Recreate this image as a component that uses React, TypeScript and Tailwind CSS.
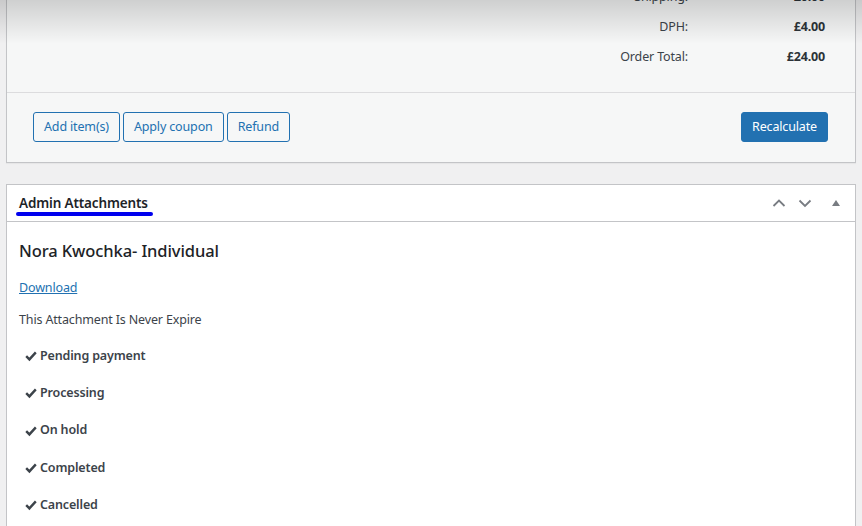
const statuses = ["Pending payment", "Processing", "On hold", "Completed", "Cancelled"];

const totals = [
  { label: "Shipping:", value: "£0.00" },
  { label: "DPH:", value: "£4.00" },
  { label: "Order Total:", value: "£24.00" },
];

function ChevronUp() {
  return (
    <svg width="16" height="16" viewBox="0 0 16 16" fill="none">
      <path d="M2.5 11 L8 5.5 L13.5 11" stroke="#787c82" strokeWidth="1.8" />
    </svg>
  );
}

function ChevronDown() {
  return (
    <svg width="16" height="16" viewBox="0 0 16 16" fill="none">
      <path d="M2.5 5.5 L8 11 L13.5 5.5" stroke="#787c82" strokeWidth="1.8" />
    </svg>
  );
}

function Tick() {
  return (
    <svg width="12" height="12" viewBox="0 0 12 12" fill="none">
      <path d="M1.2 6.2 L4.4 9.4 L10.8 2.4" stroke="#3c434a" strokeWidth="2.4" />
    </svg>
  );
}

export default function App() {
  return (
    <div
      className="relative w-[862px] h-[526px] overflow-hidden bg-[#f0f0f1] px-[6px] text-[12.5px] tracking-[-0.15px] text-[#3c434a]"
      style={{ fontFamily: '"Noto Sans", "Open Sans", sans-serif' }}
    >
      {/* Order items panel */}
      <div className="-mt-[20px] border border-t-0 border-[#c3c4c7] bg-[#f6f7f7] shadow-[0_1px_1px_rgba(0,0,0,0.04)]">
        <div className="flex flex-col pt-[2px] pb-[20px] pr-[30px]">
          {totals.map((t) => (
            <div key={t.label} className="flex h-[30px] items-center justify-end">
              <span className="text-right">{t.label}</span>
              <span className="w-[137px] text-right font-bold text-[#2c3338]">{t.value}</span>
            </div>
          ))}
        </div>
        <div className="flex items-center justify-between border-t border-[#dcdcde] pl-[26px] pr-[27px] pt-[19px] pb-[20px]">
          <div className="flex gap-[3px]">
            {["Add item(s)", "Apply coupon", "Refund"].map((b) => (
              <button
                key={b}
                className="h-[30px] rounded-[3px] border border-[#2271b1] bg-[#f6f7f7] px-[10px] text-[12.5px] text-[#2271b1]"
              >
                {b}
              </button>
            ))}
          </div>
          <button className="h-[30px] rounded-[3px] border border-[#2271b1] bg-[#2271b1] px-[10px] text-[12.5px] text-white">
            Recalculate
          </button>
        </div>
      </div>

      {/* Admin Attachments panel */}
      <div className="mt-[21px] border border-[#c3c4c7] bg-white">
        <div className="flex h-[37px] items-center justify-between border-b border-[#c3c4c7] pl-[12px] pr-[1px]">
          <h2 className="relative text-[13.5px] font-semibold text-[#1d2327]">
            Admin Attachments
            <span className="absolute -left-[3px] -right-[5px] top-[19px] h-[4px] rounded-full bg-[#0000ee]" />
          </h2>
          <div className="flex items-center">
            <span className="flex h-[36px] w-[26px] items-center justify-center">
              <ChevronUp />
            </span>
            <span className="flex h-[36px] w-[26px] items-center justify-center">
              <ChevronDown />
            </span>
            <span className="flex h-[36px] w-[36px] items-center justify-center">
              <svg width="10" height="8" viewBox="0 0 10 8">
                <path d="M1 7 L5 1 L9 7 Z" fill="#787c82" />
              </svg>
            </span>
          </div>
        </div>
        <div className="px-[12px] pt-[16px] pb-[40px]">
          <h3 className="text-[16.5px] font-medium leading-[26px] tracking-[-0.1px] text-[#1d2327]">
            Nora Kwochka- Individual
          </h3>
          <a href="#" className="mt-[14px] block leading-[20px] text-[#2271b1] underline">
            Download
          </a>
          <p className="mt-[12px] leading-[20px]">This Attachment Is Never Expire</p>
          <ul className="mt-[16px] flex flex-col gap-[17.3px]">
            {statuses.map((s) => (
              <li key={s} className="flex h-[20px] items-center gap-[3px] pl-[6px] font-semibold">
                <Tick />
                {s}
              </li>
            ))}
          </ul>
        </div>
      </div>

      {/* top scroll shadow */}
      <div className="pointer-events-none absolute inset-x-0 top-0 h-[44px] bg-gradient-to-b from-[rgba(0,0,0,0.16)] to-transparent" />
    </div>
  );
}
